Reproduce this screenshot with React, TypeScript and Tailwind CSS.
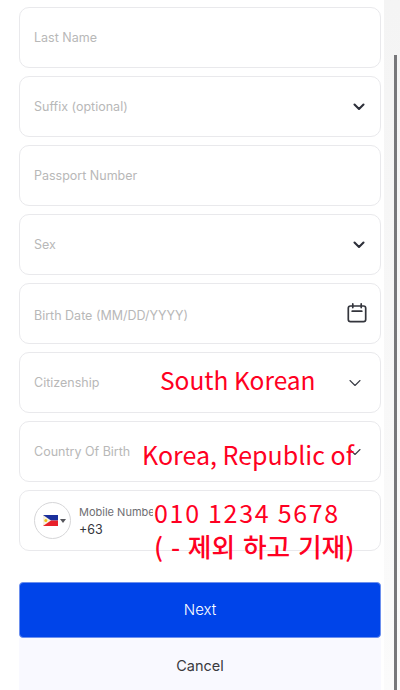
import React from "react";

const Chevron = ({ thin }: { thin?: boolean }) =>
  thin ? (
    <svg width="12" height="8" viewBox="0 0 12 8" fill="none" stroke="#3a3d46" strokeWidth="1.1" strokeLinecap="round" strokeLinejoin="round">
      <path d="M1 1.5 L6 6.5 L11 1.5" />
    </svg>
  ) : (
    <svg width="12" height="8" viewBox="0 0 12 8" fill="none" stroke="#2d2f3a" strokeWidth="2.1" strokeLinecap="round" strokeLinejoin="round">
      <path d="M1.5 1.5 L6 6 L10.5 1.5" />
    </svg>
  );

const Calendar = () => (
  <svg width="20" height="20" viewBox="0 0 20 20" fill="none" stroke="#33353c" strokeWidth="1.7" strokeLinecap="round" strokeLinejoin="round">
    <rect x="1.3" y="3" width="17.4" height="15.6" rx="2.2" />
    <path d="M5.8 0.9 V4.6 M14.2 0.9 V4.6 M5.2 8.2 H14.8" />
  </svg>
);

const Field = ({ label, right, labelClass = "" }: { label: string; right?: React.ReactNode; labelClass?: string }) => (
  <div className="h-[61px] rounded-[10px] border border-[#e9e9ec] bg-white pl-[14px] pr-[13px] flex items-center justify-between">
    <span className={`text-[12.5px] text-[#b8b8b8] ${labelClass}`}>{label}</span>
    {right}
  </div>
);

const Flag = () => (
  <svg width="15" height="11" viewBox="0 0 15 11">
    <rect width="15" height="5.5" fill="#1a2f9c" />
    <rect y="5.5" width="15" height="5.5" fill="#e8202a" />
    <path d="M0 0 L8 5.5 L0 11 Z" fill="#f7f1e0" />
    <circle cx="2.8" cy="5.5" r="1.5" fill="#f0c419" />
  </svg>
);

export default function App() {
  return (
    <div
      className="relative w-[400px] h-[690px] overflow-hidden bg-white"
      style={{ fontFamily: "Inter, 'Noto Sans', sans-serif" }}
    >
      <div className="pl-[19px] pr-[19px] pt-[7px] flex flex-col gap-2">
        <Field label="Last Name" labelClass="mt-[1px]" />
        <Field label="Suffix (optional)" right={<span className="mr-[2px] flex"><Chevron /></span>} labelClass="mt-[1px]" />
        <Field label="Passport Number" labelClass="mt-[1px]" />
        <Field label="Sex" right={<span className="mr-[2px] flex"><Chevron /></span>} labelClass="mt-[1px]" />
        <Field label="Birth Date (MM/DD/YYYY)" labelClass="mt-[6px]" right={<span className="flex -mt-[1px]"><Calendar /></span>} />
        <Field label="Citizenship" labelClass="mt-[1px]" right={<span className="mr-[6px] flex"><Chevron thin /></span>} />
        <Field label="Country Of Birth" labelClass="mt-[1px]" right={<span className="mr-[6px] flex"><Chevron thin /></span>} />
        <div className="h-[61px] rounded-[10px] border border-[#e9e9ec] bg-white pl-[14px] flex items-center gap-[8px]">
          <div className="w-[37px] h-[37px] rounded-full border border-[#d6d6d8] flex items-center justify-center gap-[2px] pl-[3px]">
            <Flag />
            <span className="w-0 h-0 border-x-[3px] border-x-transparent border-t-[4px] border-t-[#55565c]" />
          </div>
          <div className="flex flex-col w-[74px] overflow-hidden pt-[1px]">
            <span className="text-[11px] leading-[18px] text-[#6e6e72] whitespace-nowrap">Mobile Number</span>
            <span className="text-[12.5px] leading-[18px] text-[#33353c]">+63</span>
          </div>
        </div>
      </div>

      <div className="mt-[31px] mx-[19px]">
        <button className="w-full h-[56px] pt-[1px] rounded-[4px] bg-[#0044e9] border border-[#6d90ee] text-white text-[15px] font-light">Next</button>
        <div className="h-[56px] bg-[#f9f9ff] flex items-center justify-center text-[14.5px] text-[#3a3a3e]">Cancel</div>
      </div>

      {/* right edge of the page and its scrollbar */}
      <div className="absolute top-0 bottom-0 right-0 w-[16px] bg-gradient-to-b from-[#f4f4f4] to-[#fbfbfb]" />
      <div className="absolute top-[55px] bottom-0 right-[3px] w-[3px] bg-[#77777a]" />

      {/* red annotations written over the form */}
      <div className="absolute inset-0 text-[#ff0022] whitespace-nowrap" style={{ fontFamily: "'Noto Sans CJK KR', 'Noto Sans', sans-serif" }}>
        <span className="absolute left-[160px] top-[363px] text-[24.5px] leading-[34px]">South Korean</span>
        <span className="absolute left-[142px] top-[437px] text-[25px] leading-[34px]">Korea, Republic of</span>
        <span className="absolute left-[154px] top-[495px] text-[25px] leading-[34px] tracking-[1.7px]">010 1234 5678</span>
        <span className="absolute left-[154px] top-[529px] text-[25.7px] leading-[34px] font-medium [word-spacing:2px]">( - 제외 하고 기재)</span>
      </div>
    </div>
  );
}
